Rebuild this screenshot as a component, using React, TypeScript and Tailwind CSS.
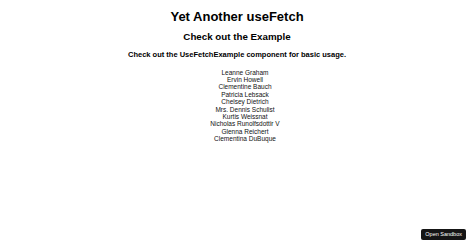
const users = [
  "Leanne Graham",
  "Ervin Howell",
  "Clementine Bauch",
  "Patricia Lebsack",
  "Chelsey Dietrich",
  "Mrs. Dennis Schulist",
  "Kurtis Weissnat",
  "Nicholas Runolfsdottir V",
  "Glenna Reichert",
  "Clementina DuBuque",
];

export default function App() {
  return (
    <div className="relative h-[248px] w-[474px] bg-white text-black" style={{ fontFamily: '"Liberation Sans", Arial, sans-serif' }}>
      <div className="flex flex-col items-center pt-[9px] text-center">
        <h1 className="text-[13px] font-bold leading-[16px]">Yet Another useFetch</h1>
        <h2 className="mt-[6px] text-[9.75px] font-bold leading-[12px]">Check out the Example</h2>
        <h3 className="mt-[7px] text-[7.5px] font-bold leading-[9px]">
          Check out the UseFetchExample component for basic usage.
        </h3>
        <ul className="mt-[9.5px] pl-[16px] text-[6.5px] leading-[7.4px] text-[#111]">
          {users.map((u) => (
            <li key={u}>{u}</li>
          ))}
        </ul>
      </div>
      <button className="absolute bottom-[8px] right-[8px] h-[11px] rounded-[2px] bg-[#151515] px-[4px] text-[5.5px] leading-[11px] text-white">
        Open Sandbox
      </button>
    </div>
  );
}
